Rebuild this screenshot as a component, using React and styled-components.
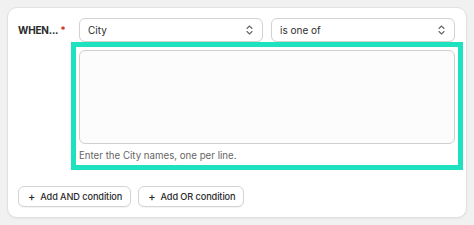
import styled, { createGlobalStyle } from "styled-components";

const Global = createGlobalStyle`
  html, body {
    margin: 0;
    background: #f1f1f1;
    font-family: Inter, "Noto Sans", sans-serif;
    color: #2b2b2b;
  }
`;

const Card = styled.div`
  box-sizing: border-box;
  margin: 7px;
  width: 460px;
  height: 211px;
  background: #fff;
  border: 1px solid #e1e1e1;
  border-radius: 10px;
  box-shadow: 0 1px 2px rgba(0, 0, 0, 0.06);
  padding: 10px 11px 11px 10px;
  display: flex;
  flex-direction: column;
`;

const Row = styled.div`
  display: grid;
  grid-template-columns: 61px 1fr;
`;

const Label = styled.div`
  height: 24px;
  display: flex;
  align-items: center;
  font-size: 10px;
  font-weight: 700;
  letter-spacing: -0.2px;
  color: #2a2a2a;
  span {
    color: #c4302b;
    margin-left: 2px;
  }
`;

const Fields = styled.div`
  display: flex;
  flex-direction: column;
  gap: 8px;
`;

const Selects = styled.div`
  display: grid;
  grid-template-columns: 1fr 1fr;
  gap: 8px;
`;

const Select = styled.div`
  box-sizing: border-box;
  height: 24px;
  border: 1px solid #d2d2d2;
  border-radius: 6px;
  background: #fff;
  box-shadow: 0 1px 1px rgba(0, 0, 0, 0.04);
  display: flex;
  align-items: center;
  justify-content: space-between;
  padding: 0 9px 0 8px;
  font-size: 10px;
  color: #2e2e2e;
`;

const Highlight = styled.div`
  outline: 5px solid #1ee1bf;
  outline-offset: 3px;
  display: flex;
  flex-direction: column;
  gap: 5px;
`;

const TextArea = styled.div`
  box-sizing: border-box;
  height: 94px;
  border: 1px solid #cfcfcf;
  border-radius: 6px;
  background: #fcfcfd;
`;

const Help = styled.div`
  font-size: 9.7px;
  color: #666;
  line-height: 13px;
`;

const Divider = styled.div`
  height: 1px;
  background: #ececec;
  margin: 12px 0 12px;
`;

const Buttons = styled.div`
  display: flex;
  gap: 7px;
`;

const Button = styled.div`
  box-sizing: border-box;
  height: 21px;
  padding: 0 8px 0 9px;
  border: 1px solid #d4d4d4;
  border-radius: 6px;
  background: #fff;
  box-shadow: 0 1px 1px rgba(0, 0, 0, 0.05);
  display: flex;
  align-items: center;
  gap: 5px;
  font-size: 9.2px;
  font-weight: 500;
  letter-spacing: -0.1px;
  color: #2b2b2b;
  b {
    font-size: 11px;
    font-weight: 500;
  }
`;

const Chevrons = () => (
  <svg width="7" height="10" viewBox="0 0 7 10" fill="none" stroke="#666" strokeWidth="1.1" strokeLinecap="round" strokeLinejoin="round">
    <path d="M1 3.5 L3.5 1 L6 3.5" />
    <path d="M1 6.5 L3.5 9 L6 6.5" />
  </svg>
);

export default function App() {
  return (
    <>
      <Global />
      <Card>
        <Row>
          <Label>
            WHEN...<span>*</span>
          </Label>
          <Fields>
            <Selects>
              <Select>
                City
                <Chevrons />
              </Select>
              <Select>
                is one of
                <Chevrons />
              </Select>
            </Selects>
            <Highlight>
              <TextArea />
              <Help>Enter the City names, one per line.</Help>
            </Highlight>
          </Fields>
        </Row>
        <Divider />
        <Buttons>
          <Button>
            <b>+</b>Add AND condition
          </Button>
          <Button>
            <b>+</b>Add OR condition
          </Button>
        </Buttons>
      </Card>
    </>
  );
}
